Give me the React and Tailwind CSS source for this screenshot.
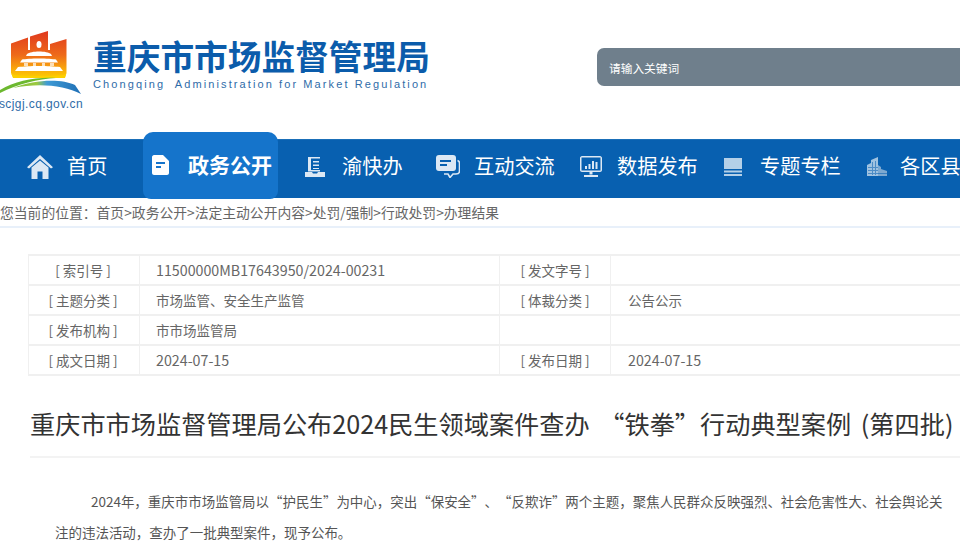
const cjk = "font-['Noto_Sans_CJK_SC','Liberation_Sans',sans-serif]";

const Logo = () => (
  <svg width="84" height="75" viewBox="0 20 84 75" className="block">
    <defs>
      <linearGradient id="wall" gradientUnits="userSpaceOnUse" x1="0" y1="32" x2="0" y2="78">
        <stop offset="0" stopColor="#e03a1e" />
        <stop offset="0.5" stopColor="#ee6a1a" />
        <stop offset="0.8" stopColor="#f9a80c" />
        <stop offset="1" stopColor="#fdd000" />
      </linearGradient>
      <linearGradient id="arc" x1="0" y1="0" x2="1" y2="0">
        <stop offset="0" stopColor="#7fbe3a" />
        <stop offset="0.35" stopColor="#9cc93f" />
        <stop offset="0.5" stopColor="#3f9bd5" />
        <stop offset="1" stopColor="#1f6fb5" />
      </linearGradient>
    </defs>
    <path d="M11 43.500L28 37.500V77H13L11 73ZM30 36.500L48 31V77H30ZM50 44L66.500 39V73L65 77H50Z" fill="url(#wall)" />
    <rect x="28" y="50" width="22" height="27" fill="url(#wall)" />
    <ellipse cx="39" cy="44.500" rx="2.500" ry="3.600" fill="#fff" />
    <path d="M27 54C31 50.500 47 50.500 51 54L52 56H26Z" fill="#fff" />
    <path d="M22 59.500C28 58 50 58 56 59.500L58 62.500H20Z" fill="#fff" />
    <path d="M24 63H28V66H24ZM33 63H36V66H33ZM42 63H45V66H42ZM50 63H54V66H50Z" fill="#fff" opacity="0.7" />
    <path d="M18 67C28 65.500 50 65.500 60 67L63 71H15Z" fill="#fff" />
    <path d="M11 73L13 78H65L66.500 73C66 75 64 76 39 76C14 76 12 75 11 73Z" fill="#fdd000" />
    <path d="M0 90C16 81 34 77 56 78C38 79 18 84 0 93Z" fill="#6cb82f" />
    <path d="M13 88C36 79 62 79 75 85L81 94C64 85 38 83 13 88Z" fill="url(#arc)" />
  </svg>
);

const HomeIcon = () => (
  <svg width="26" height="26" viewBox="0 0 26 26" fill="#dce8f4">
    <path d="M13 1L26 13.200L24 14.600L13 5L2 14.600L0 13.200ZM4.500 13.500L13 6.500L21.500 13.500V25H15.500V17.500H10.500V25H4.500Z" />
  </svg>
);
const DocIcon = () => (
  <svg width="17" height="20" viewBox="0 0 17 20">
    <path d="M2 0H11L17 6V18C17 19 16 20 15 20H2C1 20 0 19 0 18V2C0 1 1 0 2 0Z" fill="#fff" />
    <path d="M4 7H13V9H4ZM4 11H9V13H4Z" fill="#1574cb" />
  </svg>
);
const BookIcon = () => (
  <svg width="20" height="20" viewBox="0 0 20 20" fill="#dce8f4">
    <path d="M3 0H15V1.500H6V13H15V14.500H3ZM8 4H14V5.500H8ZM8 7.500H14V9H8ZM8 11H14V12H8Z" />
    <path d="M0 15H7L8 16.500H12L13 15H20V20H0Z" />
  </svg>
);
const ChatIcon = () => (
  <svg width="24" height="23" viewBox="0 0 24 23">
    <path d="M3 0H17C19 0 20 1 20 3V13C20 15 19 16 17 16H3C1 16 0 15 0 13V3C0 1 1 0 3 0Z" fill="#dce8f4" />
    <path d="M4 5H15V7H4ZM4 9H11V11H4Z" fill="#0860b0" />
    <path d="M21.500 5.500C23 6 23.500 7 23.500 8V16C23.500 18 22 19 20 19H17L14 22.500L12 19H8" fill="none" stroke="#dce8f4" strokeWidth="1.600" />
  </svg>
);
const ChartIcon = () => (
  <svg width="22" height="21" viewBox="0 0 22 21" fill="#dce8f4">
    <path fillRule="evenodd" d="M2 0H20C21 0 22 1 22 2V14C22 15 21 16 20 16H2C1 16 0 15 0 14V2C0 1 1 0 2 0ZM1.500 1.500V14.500H20.500V1.500Z" />
    <path d="M5 10H7V13H5ZM8.500 8H10.500V13H8.500ZM12 5H14V13H12ZM15.500 6H17.500V13H15.500ZM9.500 16H12.500V18.500H9.500ZM4 19H18V21H4Z" />
  </svg>
);
const ListIcon = () => (
  <svg width="18" height="18" viewBox="0 0 18 18" fill="#b4d0e8">
    <path d="M0 0H18V11H0ZM0 12.500H18V14.500H0ZM0 16H18V18H0Z" />
  </svg>
);
const BuildingIcon = () => (
  <svg width="21" height="19" viewBox="0 0 21 19">
    <path d="M1 19V8L5 6V3L12 0V19Z" fill="#9fc2e0" />
    <path d="M12 8L15 10V12L21 14V19H12Z" fill="#7ea9d0" />
    <path d="M6 5H7V18H6ZM9 4H10V18H9ZM2 10H12V11H2ZM2 13H12V14H2ZM2 16H21V17H2Z" fill="#0860b0" opacity="0.55" />
  </svg>
);

const navItems = [
  { icon: <HomeIcon />, label: "首页", box: "pl-[27px] w-[143px]", gap: "gap-[14px]" },
  { icon: <DocIcon />, label: "政务公开", active: true },
  { icon: <BookIcon />, label: "渝快办", box: "pl-[26px] w-[157px]", gap: "gap-[17px]" },
  { icon: <ChatIcon />, label: "互动交流", box: "w-[144px]", gap: "gap-[15px]" },
  { icon: <ChartIcon />, label: "数据发布", box: "w-[144px]", gap: "gap-[15px]" },
  { icon: <ListIcon />, label: "专题专栏", box: "w-[142px]", gap: "gap-[18px]" },
  { icon: <BuildingIcon />, label: "各区县", box: "w-[120px]", gap: "gap-[13px]" },
];

const rows = [
  ["索引号", "11500000MB17643950/2024-00231", "发文字号", ""],
  ["主题分类", "市场监管、安全生产监管", "体裁分类", "公告公示"],
  ["发布机构", "市市场监管局", "", ""],
  ["成文日期", "2024-07-15", "发布日期", "2024-07-15"],
];

// 编号和日期的数字比汉字略宽，单独放大一点
const Value = ({ text }) => (
  <span className={/^\d/.test(text) ? "text-[14.25px]" : undefined}>{text}</span>
);

export default function App() {
  return (
    <div className={`w-[960px] h-[548px] overflow-hidden bg-white [text-spacing-trim:space-all] ${cjk}`}>
      {/* 头部 */}
      <header className="h-[139px] flex items-start">
        <div className="w-[84px] shrink-0 pt-[20px]">
          <Logo />
          <div className="w-[83px] flex justify-end whitespace-nowrap text-[12px] leading-[14px] tracking-[0.42px] text-[#2f6ca8] font-['Liberation_Sans',sans-serif] mt-[2px]">
            scjgj.cq.gov.cn
          </div>
        </div>
        <div className="ml-[9px] pt-[37px] w-[340px] shrink-0">
          <div className="text-[33.7px] leading-[38px] font-bold text-[#0b5cab] whitespace-nowrap">重庆市市场监督管理局</div>
          <div className="text-[11px] leading-[14px] tracking-[2.1px] text-[#2f6ca8] whitespace-pre font-['Liberation_Sans',sans-serif] mt-[2px]">Chongqing  Administration for Market Regulation</div>
        </div>
        <div className="ml-[164px] mt-[48px] w-[400px] h-[38px] shrink-0 rounded-l-[7px] bg-[#6f7f8c] flex items-center pl-[12px] pt-[1px] text-[11.7px] text-white">
          请输入关键词
        </div>
      </header>

      {/* 导航 */}
      <nav className="h-[59px] bg-[#0860b0] border-t border-[#1a6fb8] flex items-stretch whitespace-nowrap">
        {navItems.map((item) =>
          item.active ? (
            <div key={item.label} className="-mt-[8px] -mb-[1px] w-[135px] shrink-0 mr-[1px] pb-[2px] rounded-t-[10px] rounded-b-[8px] bg-[#1574cb] flex items-center pl-[9px] gap-[19px] text-white text-[21px] font-bold">
              {item.icon}
              <span>{item.label}</span>
            </div>
          ) : (
            <div key={item.label} className={`shrink-0 flex items-center pb-[5px] text-white text-[20.2px] ${item.box} ${item.gap}`}>
              {item.icon}
              <span className={item.label === "互动交流" ? "-ml-px" : undefined}>{item.label}</span>
            </div>
          )
        )}
      </nav>

      {/* 当前位置 */}
      <div className="h-[30px] border-b-2 border-[#e8f0fa] text-[13.8px] leading-[29px] text-[#666] whitespace-nowrap">
        您当前的位置：首页&gt;政务公开&gt;法定主动公开内容&gt;处罚/强制&gt;行政处罚&gt;办理结果
      </div>

      {/* 信息表 */}
      <div className="pl-[28px] pt-[26px]">
        <table className="w-[1100px] table-fixed border-collapse text-[13.5px] text-[#666]">
          <colgroup>
            <col className="w-[111px]" />
            <col className="w-[360px]" />
            <col className="w-[111px]" />
            <col />
          </colgroup>
          <tbody>
            {rows.map((r) => (
              <tr key={r[0]} className="h-[30px]">
                <td className="border-x border-y-2 border-[#f0f0f0] text-center p-0 pr-[2px]">[ {r[0]} ]</td>
                <td className="border-x border-y-2 border-[#f0f0f0] p-0 pl-[16px]"><Value text={r[1]} /></td>
                <td className="border-x border-y-2 border-[#f0f0f0] text-center p-0">{r[2] && `[ ${r[2]} ]`}</td>
                <td className="border-x border-y-2 border-[#f0f0f0] p-0 pl-[17px]"><Value text={r[3]} /></td>
              </tr>
            ))}
          </tbody>
        </table>
      </div>

      {/* 正文 */}
      <div className="pl-[30px]">
        <h1 className="mt-[25px] h-[57px] border-b-2 border-[#f3f3f3] w-[1000px] text-[25.2px] leading-[44px] font-normal text-[#333] whitespace-nowrap [word-spacing:4px]">
          重庆市市场监督管理局公布2024民生领域案件查办 “铁拳”行动典型案例 (第四批)
        </h1>
        <p className="mt-[28px] ml-[25px] w-[890px] indent-[36px] text-[13.47px] leading-[31px] text-[#555]">
          2024年，重庆市市场监管局以“护民生”为中心，突出“保安全”、“反欺诈”两个主题，聚焦人民群众反映强烈、社会危害性大、社会舆论关注的违法活动，查办了一批典型案件，现予公布。
        </p>
      </div>
    </div>
  );
}
